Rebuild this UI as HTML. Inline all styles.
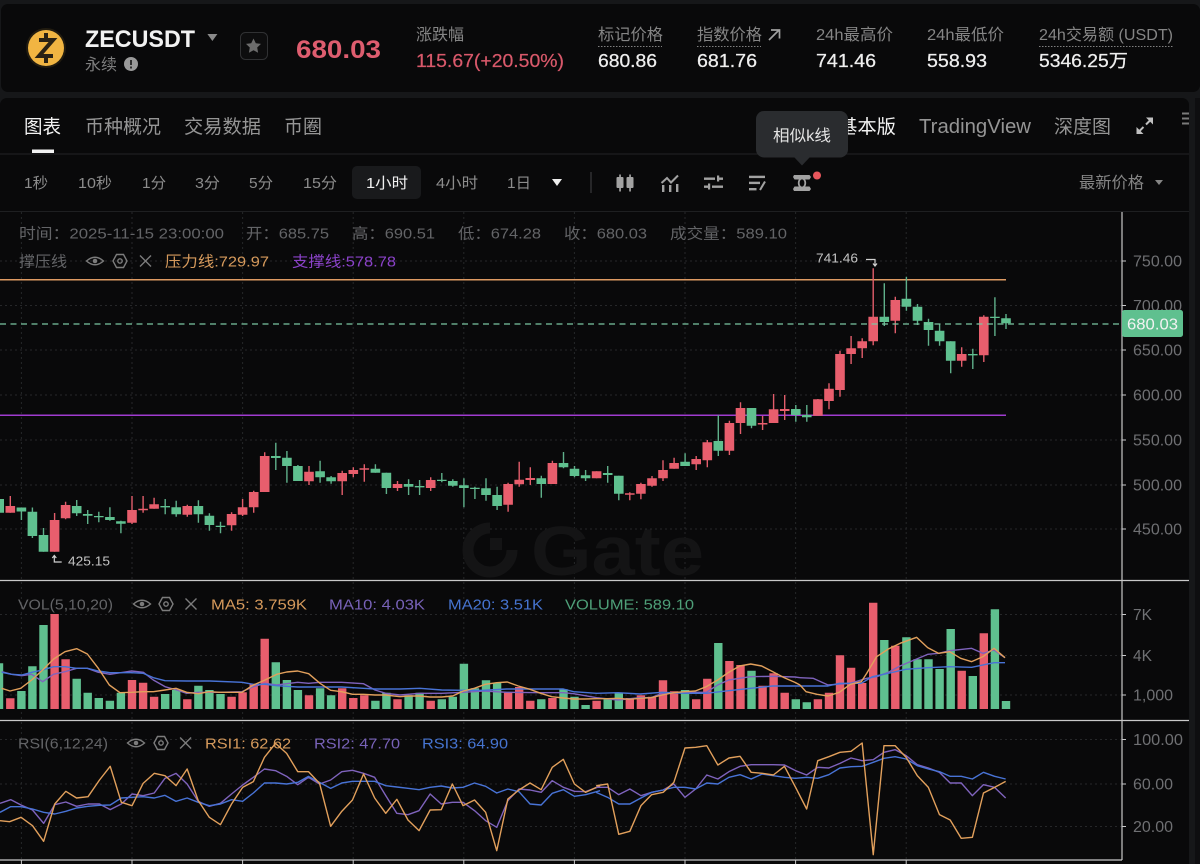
<!DOCTYPE html>
<html lang="zh">
<head>
<meta charset="utf-8">
<title>ZECUSDT</title>
<style>
html,body{margin:0;padding:0;background:#18191b;width:1200px;height:864px;overflow:hidden}
svg{display:block}
text{font-family:"Liberation Sans","Noto Sans CJK SC",sans-serif}
</style>
</head>
<body>
<svg width="1200" height="864" viewBox="0 0 1200 864" xmlns="http://www.w3.org/2000/svg">
<defs>
<g id="eye" fill="none" stroke="#7c7c7c" stroke-width="1.4"><path d="M-8.5 0Q0-7.5 8.5 0Q0 7.5-8.5 0z"/><circle r="1.6" fill="#7c7c7c"/></g>
<g id="hex" fill="none" stroke="#7c7c7c" stroke-width="1.4"><path d="M-7 0L-3.5-6.5H3.5L7 0L3.5 6.5H-3.5z"/><circle r="2.2"/></g>
<g id="cross" fill="none" stroke="#7c7c7c" stroke-width="1.4"><path d="M-5.5-5.5L5.5 5.5M5.5-5.5L-5.5 5.5"/></g>
</defs>

<rect width="1200" height="864" fill="#161719"/>
<rect x="1195" y="98" width="5" height="766" fill="#0e0e10"/>
<rect x="1" y="4" width="1199" height="88" rx="7" fill="#09090a"/>
<rect x="0" y="98" width="1189" height="780" rx="7" fill="#09090a"/>

<!-- header -->
<circle cx="46" cy="48" r="20" fill="#221c10"/>
<circle cx="46" cy="48" r="18" fill="#f1b542"/>
<path d="M39 40H53L39 56H53M46 33V40M46 56V63" fill="none" stroke="#2a2214" stroke-width="4"/>
<text x="85" y="47" font-size="24" font-weight="700" fill="#f2f2f2" textLength="110" lengthAdjust="spacingAndGlyphs">ZECUSDT</text>
<path d="M207.4 34H217.4L212.4 41z" fill="#8a8a8a"/>
<text x="85" y="70" font-size="16" fill="#7e7e7e">永续</text>
<circle cx="131" cy="64" r="7" fill="#9a9a9a"/>
<path d="M131 60V65M131 66.5V68.5" stroke="#222" stroke-width="1.8"/>
<rect x="240.5" y="32.5" width="27" height="27" rx="5" fill="#0d0d0e" stroke="#303133"/>
<path d="M253.5 38.5l2.3 4.7 5.2.7-3.8 3.6.9 5.2-4.6-2.5-4.6 2.5.9-5.2-3.8-3.6 5.2-.7z" fill="#6c6c6c"/>
<text x="296" y="58" font-size="25" font-weight="700" fill="#de5d6f" textLength="85" lengthAdjust="spacingAndGlyphs">680.03</text>
<text x="416" y="40" font-size="16" fill="#858585">涨跌幅</text>
<text x="416" y="67" font-size="18" fill="#d9596b" stroke="#d9596b" stroke-width=".2" textLength="148" lengthAdjust="spacingAndGlyphs">115.67(+20.50%)</text>

<g font-size="16" fill="#858585">
<text x="598" y="40" textLength="65" lengthAdjust="spacingAndGlyphs">标记价格</text>
<text x="697" y="40" textLength="65" lengthAdjust="spacingAndGlyphs">指数价格</text>
<text x="816" y="40" textLength="77" lengthAdjust="spacingAndGlyphs">24h最高价</text>
<text x="927" y="40" textLength="77" lengthAdjust="spacingAndGlyphs">24h最低价</text>
<text x="1039" y="40" textLength="134" lengthAdjust="spacingAndGlyphs">24h交易额 (USDT)</text>
</g>
<path d="M598 46.5H662M697 46.5H761M1039 46.5H1173" stroke="#808080" stroke-width="1" stroke-dasharray="1.5 1.5"/>
<path d="M769 40L779 30M771 30H779.5V38.5" fill="none" stroke="#a0a0a0" stroke-width="1.7"/>
<g font-size="18" fill="#efefef" stroke="#efefef" stroke-width=".25">
<text x="598" y="67" textLength="59" lengthAdjust="spacingAndGlyphs">680.86</text>
<text x="697" y="67" textLength="60" lengthAdjust="spacingAndGlyphs">681.76</text>
<text x="816" y="67" textLength="60" lengthAdjust="spacingAndGlyphs">741.46</text>
<text x="927" y="67" textLength="60" lengthAdjust="spacingAndGlyphs">558.93</text>
<text x="1039" y="67" textLength="89" lengthAdjust="spacingAndGlyphs">5346.25万</text>
</g>

<!-- tabs -->
<g font-size="19" fill="#959595">
<text x="24" y="133" fill="#f2f2f2" textLength="37" lengthAdjust="spacingAndGlyphs">图表</text>
<text x="85" y="133" textLength="76" lengthAdjust="spacingAndGlyphs">币种概况</text>
<text x="184" y="133" textLength="77" lengthAdjust="spacingAndGlyphs">交易数据</text>
<text x="284" y="133" textLength="38" lengthAdjust="spacingAndGlyphs">币圈</text>
<text x="838" y="133" fill="#f2f2f2" textLength="58" lengthAdjust="spacingAndGlyphs">基本版</text>
<text x="919" y="133" font-size="20" textLength="112" lengthAdjust="spacingAndGlyphs">TradingView</text>
<text x="1054" y="133" textLength="57" lengthAdjust="spacingAndGlyphs">深度图</text>
</g>
<rect x="32" y="149.5" width="22" height="3.5" fill="#f2f2f2"/>
<path d="M0 154H1189" stroke="#232426" stroke-width="1"/>
<path d="M1153 117.5V124.5L1146 117.5zM1136.5 134V127L1143.5 134z" fill="#c0c0c0"/>
<path d="M1150.5 120L1146 124.5M1139 131.5L1143.5 127" stroke="#c0c0c0" stroke-width="2"/>
<path d="M1182 113.5H1189M1182 118.5H1189M1182 123.5H1189" stroke="#7a7a7a" stroke-width="2"/>

<!-- toolbar -->
<rect x="352" y="166" width="69" height="33" rx="5" fill="#191a1c"/>
<g font-size="15" fill="#8c8c8c">
<text x="24" y="188" textLength="24" lengthAdjust="spacingAndGlyphs">1秒</text>
<text x="78" y="188" textLength="34" lengthAdjust="spacingAndGlyphs">10秒</text>
<text x="142" y="188" textLength="24" lengthAdjust="spacingAndGlyphs">1分</text>
<text x="195" y="188" textLength="25" lengthAdjust="spacingAndGlyphs">3分</text>
<text x="249" y="188" textLength="24" lengthAdjust="spacingAndGlyphs">5分</text>
<text x="303" y="188" textLength="34" lengthAdjust="spacingAndGlyphs">15分</text>
<text x="366" y="188" fill="#f0f0f0" textLength="42" lengthAdjust="spacingAndGlyphs">1小时</text>
<text x="436" y="188" textLength="42" lengthAdjust="spacingAndGlyphs">4小时</text>
<text x="507" y="188" textLength="24" lengthAdjust="spacingAndGlyphs">1日</text>
<text x="1079" y="188" font-size="16" fill="#858585" textLength="65" lengthAdjust="spacingAndGlyphs">最新价格</text>
</g>
<path d="M552 179H562L557 186z" fill="#eee"/>
<path d="M1155 180H1163L1159 185z" fill="#858585"/>
<path d="M591 172V193" stroke="#3a3b3d" stroke-width="1.2"/>
<!-- icons -->
<g fill="#a2a2a2" stroke="none">
<rect x="616.5" y="177" width="7" height="11" rx="1"/><rect x="619.2" y="174.5" width="1.7" height="17"/>
<rect x="626.5" y="177" width="7" height="11" rx="1"/><rect x="629.2" y="174.5" width="1.7" height="17"/>
<rect x="662" y="185" width="2.4" height="7"/><rect x="669" y="185" width="2.4" height="7"/><rect x="676" y="184" width="2.4" height="8"/>
<rect x="704" y="177.5" width="11" height="2.4"/><rect x="717" y="175.5" width="2.2" height="6"/><rect x="719" y="177.5" width="4" height="2.4"/>
<rect x="704" y="185.5" width="4" height="2.4"/><rect x="708" y="183.5" width="2.2" height="6"/><rect x="712" y="185.5" width="11" height="2.4"/>
<rect x="749" y="175.7" width="16" height="2.4"/><rect x="749" y="181.7" width="11" height="2.4"/><rect x="749" y="188" width="7.5" height="2.4"/>
<path d="M794 175H809.5L811 177L809.5 179.5H794.5L793 177zM794.5 186.5H809.5L811 189L809.5 191H794L793 189z"/>
</g>
<path d="M661.5 183L667 178L671 182.5L678 175.5" fill="none" stroke="#a2a2a2" stroke-width="2"/>
<path d="M765 181.5L760 190" fill="none" stroke="#a2a2a2" stroke-width="2"/>
<ellipse cx="802" cy="183" rx="3.3" ry="4.6" fill="none" stroke="#a2a2a2" stroke-width="1.8"/>
<circle cx="817" cy="175.5" r="4" fill="#e8565c"/>
<path d="M0 211.5H1189" stroke="#1e1f21" stroke-width="1"/>

<!-- grid -->
<g stroke="#262729" stroke-width="1" stroke-dasharray="2 3" fill="none">
<path d="M0 261H1122M0 350H1122M0 395H1122M0 440H1122M0 485H1122M0 529H1122M0 305.5H1122"/>
<path d="M0 614.5H1122M0 655.5H1122M0 695H1122M0 739.5H1122M0 784H1122M0 826.5H1122"/>
<path d="M21.4 212V860M132 212V860M242.6 212V860M353.2 212V860M463.8 212V860M574.4 212V860M685 212V860M795.6 212V860M906.2 212V860"/>
</g>

<!-- watermark -->
<g fill="#141415">
<path d="M490 528A22 22 0 1 0 512 550" fill="none" stroke="#141415" stroke-width="11"/>
<rect x="490" y="538" width="12" height="12"/>
<text x="531" y="575" font-size="70" font-weight="700" textLength="173" lengthAdjust="spacingAndGlyphs">Gate</text>
</g>

<!-- sr lines -->
<path d="M0 279.7H1006" stroke="#dd9a63" stroke-width="1.5"/>
<path d="M0 415.3H1006" stroke="#a03ccf" stroke-width="1.5"/>

<!-- red wicks -->
<path fill="none" stroke="#e25d6b" stroke-width="1.4" d="M10.3 496V512.7M54.6 513V551.7M65.6 501.7V519.3M132 496V524M143.1 496V512.7M154.1 497.7V508.7M187.3 504.7V516.7M231.6 512.3V530.7M242.6 499V516M253.7 490.7V512.7M264.7 452.3V492M309 466V485M342.2 470.7V495M353.3 467.3V477.3M364.3 464.3V481.7M397.5 481V491M430.7 477.3V491M508.1 482.7V511.7M519.2 461.7V486.7M530.3 467.3V485M552.4 460.7V484M596.6 471.3V478.3M629.8 492.3V500.3M640.9 482.7V499.3M652 476V486.7M663 460.3V481M674.1 457.7V468.7M696.2 456V470M707.3 440V467.3M729.4 420.7V455M740.5 402.3V434M762.6 416V430M773.6 394V423M784.7 395V420M817.9 399V415.7M829 383.3V409.3M840 350.7V396.7M851.1 336V364M862.2 338.3V358M873.2 268.3V345.3M895.3 296.7V333.3M961.7 347.3V366.7M983.8 315.3V362"/>
<!-- red bodies -->
<path fill="none" stroke="#e85e6d" stroke-width="9.6" d="M10.3 506V512.7M54.6 520V551.7M65.6 505V518.3M132 510V522.7M143.1 508.7V510.3M154.1 504.3V508.7M187.3 506V514.7M231.6 514V525.3M242.6 507.3V514.7M253.7 492V507.3M264.7 456V492M309 471.7V481.3M342.2 473V481.3M353.3 470V474M364.3 468.3V469.7M397.5 484V488M430.7 480V488M508.1 484V504.7M519.2 479.7V484.3M530.3 478V480M552.4 463V484M596.6 471.3V478.3M629.8 493.3V494.7M640.9 484V493.7M652 478.3V485.7M663 470V478.3M674.1 463V468.7M696.2 459V464.3M707.3 442.3V460.3M729.4 423V450.7M740.5 408V423M762.6 423V424.5M773.6 409.3V423M784.7 409V411M817.9 399.3V415.7M829 388.7V401M840 354V390M851.1 348.3V354M862.2 341.3V348.3M873.2 316.7V341.3M895.3 300V320.7M961.7 354V360.7M983.8 316.7V355.3"/>
<!-- green wicks -->
<path fill="none" stroke="#5fb08a" stroke-width="1.4" d="M21.4 507.5V520M32.4 507.5V538M43.5 528V551.7M76.7 500V516M87.7 510V524M98.8 511.7V522.3M109.9 507.3V520.7M120.9 520.7V533.3M165.2 499V514.3M176.2 500.7V516.7M198.4 500.3V522.7M209.4 513.3V530.7M220.5 521.7V533.3M275.8 442.7V470M286.9 451V482.7M297.9 465V481M320.1 460.7V482.7M331.1 476V483.7M375.4 464.3V472.7M386.4 472.7V494M408.6 479.3V495M419.6 480V495M441.8 473V482.3M452.8 479.3V486.7M463.9 478.3V507.3M474.9 486.7V499M486 478.3V500.7M497.1 486.7V510M541.3 475.7V497.7M563.5 452V468.3M574.5 466V477.3M585.6 470V481M607.7 466V482.7M618.8 475.7V500.3M685.1 453.3V466M718.3 415.3V456M751.5 408V428.3M795.8 405V421.7M806.8 405V421.7M884.3 283.3V326M906.4 276.7V310.7M917.5 304V325M928.5 318.7V345.7M939.6 324V345.7M950.7 341.3V373.3M972.8 348.7V369M994.9 297.3V336M1006 314V329"/>
<!-- green bodies -->
<path fill="none" stroke="#5fc08f" stroke-width="9.6" d="M-.8 499V512.7M21.4 507.5V511.5M32.4 511.7V536M43.5 535V551.7M76.7 506V513.3M87.7 514V515.7M98.8 516V517.3M109.9 517V520M120.9 521.3V523.7M165.2 506V507.4M176.2 507.3V514.3M198.4 506V514.3M209.4 515.7V525M220.5 525.7V527M275.8 456V458M286.9 457.7V466M297.9 466V481M320.1 471.3V477.3M331.1 477.3V481.3M375.4 468.7V472.7M386.4 472.7V488M408.6 484V486.7M419.6 486V487.4M441.8 479.7V481M452.8 481V485.7M463.9 485.3V488M474.9 487.7V489M486 488.3V495M497.1 495V506M541.3 478.3V484M563.5 463V467.3M574.5 468.7V476M585.6 475.3V478.3M607.7 473V475M618.8 475.7V493.7M685.1 461.7V466M718.3 441V450.7M751.5 408V425.7M795.8 409V415M806.8 415V417.3M884.3 316.7V322M906.4 298.7V306.7M917.5 306.7V320.7M928.5 322V330M939.6 330.7V341.3M950.7 341.3V360.7M972.8 354V355.4M994.9 316.7V318M1006 318.3V323.3"/>

<!-- current price -->
<path d="M0 324H1122" stroke="#7cc6a2" stroke-width="1.2" stroke-dasharray="6 4.5"/>

<!-- hi/lo markers -->
<text x="816" y="262.5" font-size="13" fill="#c4c4c4" textLength="42" lengthAdjust="spacingAndGlyphs">741.46</text>
<path d="M866 259.5H875V266M873 263.5L875 266L877 263.5" fill="none" stroke="#d0d0d0" stroke-width="1.2"/>
<text x="68" y="565.5" font-size="13" fill="#c4c4c4" textLength="42" lengthAdjust="spacingAndGlyphs">425.15</text>
<path d="M61.7 562H54.3V555.5M52.3 558L54.3 555.5L56.3 558" fill="none" stroke="#d0d0d0" stroke-width="1.2"/>

<!-- legends -->
<g font-size="15" fill="#636467">
<text x="19" y="238.5" textLength="205" lengthAdjust="spacingAndGlyphs">时间：2025-11-15 23:00:00</text>
<text x="246" y="238.5" textLength="83" lengthAdjust="spacingAndGlyphs">开：685.75</text>
<text x="352" y="238.5" textLength="83" lengthAdjust="spacingAndGlyphs">高：690.51</text>
<text x="458" y="238.5" textLength="83" lengthAdjust="spacingAndGlyphs">低：674.28</text>
<text x="564" y="238.5" textLength="83" lengthAdjust="spacingAndGlyphs">收：680.03</text>
<text x="670" y="238.5" textLength="117" lengthAdjust="spacingAndGlyphs">成交量：589.10</text>
<text x="19" y="266.5" textLength="48" lengthAdjust="spacingAndGlyphs">撑压线</text>
<text x="165" y="266.5" fill="#d69a5c" textLength="104" lengthAdjust="spacingAndGlyphs">压力线:729.97</text>
<text x="292" y="266.5" fill="#8a42c8" textLength="104" lengthAdjust="spacingAndGlyphs">支撑线:578.78</text>
<text x="18" y="609.5" textLength="95" lengthAdjust="spacingAndGlyphs">VOL(5,10,20)</text>
<text x="211" y="609.5" fill="#d69a5c" textLength="96" lengthAdjust="spacingAndGlyphs">MA5: 3.759K</text>
<text x="329" y="609.5" fill="#7862b8" textLength="96" lengthAdjust="spacingAndGlyphs">MA10: 4.03K</text>
<text x="448" y="609.5" fill="#4674d0" textLength="95" lengthAdjust="spacingAndGlyphs">MA20: 3.51K</text>
<text x="565" y="609.5" fill="#4e9f78" textLength="129" lengthAdjust="spacingAndGlyphs">VOLUME: 589.10</text>
<text x="18" y="748.5" textLength="90" lengthAdjust="spacingAndGlyphs">RSI(6,12,24)</text>
<text x="205" y="748.5" fill="#d69a5c" textLength="86" lengthAdjust="spacingAndGlyphs">RSI1: 62.62</text>
<text x="314" y="748.5" fill="#7862b8" textLength="86" lengthAdjust="spacingAndGlyphs">RSI2: 47.70</text>
<text x="422" y="748.5" fill="#4674d0" textLength="86" lengthAdjust="spacingAndGlyphs">RSI3: 64.90</text>
</g>
<use href="#eye" x="95" y="261"/><use href="#hex" x="120" y="261"/><use href="#cross" x="145.5" y="261"/>
<use href="#eye" x="142" y="604"/><use href="#hex" x="166" y="604"/><use href="#cross" x="191" y="604"/>
<use href="#eye" x="136" y="743"/><use href="#hex" x="161" y="743"/><use href="#cross" x="185.6" y="743"/>

<!-- volume bars -->
<path fill="none" stroke="#5fc08f" stroke-width="8.4" d="M-1 709V663.3M21.4 709V691M32.4 709V666.3M43.5 709V625M76.7 709V678.7M87.7 709V692.7M98.8 709V698M109.9 709V700.7M120.9 709V692.7M165.2 709V694M176.2 709V690M198.4 709V685.7M209.4 709V690M220.5 709V694M275.8 709V662.3M286.9 709V680M297.9 709V690M320.1 709V688.3M331.1 709V695.3M375.4 709V700.7M386.4 709V692.7M408.6 709V695.3M419.6 709V692.7M441.8 709V699.3M452.8 709V696.7M463.9 709V663.7M474.9 709V688.3M486 709V680.3M497.1 709V683M541.3 709V699.3M563.5 709V689.3M574.5 709V696.7M585.6 709V705M607.7 709V699.3M618.8 709V692.7M685.1 709V690M718.3 709V643M751.5 709V670.7M795.8 709V699.3M806.8 709V702.3M884.3 709V640M906.4 709V637.3M917.5 709V659.3M928.5 709V659.3M939.6 709V669M950.7 709V629M972.8 709V676M994.9 709V609.3M1006 709V701"/>
<path fill="none" stroke="#e85e6d" stroke-width="8.4" d="M10.3 709V698.3M54.6 709V614M65.6 709V659.3M132 709V680M143.1 709V682.7M154.1 709V696.7M187.3 709V699.3M231.6 709V696.7M242.6 709V692.3M253.7 709V684.3M264.7 709V638.7M309 709V695.3M342.2 709V688.3M353.3 709V698M364.3 709V695.3M397.5 709V699.3M430.7 709V700.7M508.1 709V692.7M519.2 709V687M530.3 709V700.7M552.4 709V698M596.6 709V700.7M629.8 709V698M640.9 709V695.3M652 709V696.7M663 709V680.3M674.1 709V691.3M696.2 709V699.3M707.3 709V678.7M729.4 709V661M740.5 709V665M762.6 709V685.7M773.6 709V673.3M784.7 709V692.7M817.9 709V699.3M829 709V692.7M840 709V655.3M851.1 709V667.7M862.2 709V683M873.2 709V602.7M895.3 709V645.7M961.7 709V670.7M983.8 709V633.3"/>

<!-- volume lines -->
<g fill="none" stroke-width="1.4" stroke-linejoin="round">
<g transform="translate(0 585) scale(.33333)">
<polyline vector-effect="non-scaling-stroke" stroke="#7f63bd" points="5,260 35,268 65,272 95,268 128,290 160,268 195,260 230,250 262,250 295,262 330,268 395,258 430,262 460,285 495,305 530,315 560,325 595,322 660,322 726,320 760,305 795,295 830,300 860,296 893,292 926,295 960,292 1025,292 1090,296 1125,315 1157,325 1200,330"/>
<polyline vector-effect="non-scaling-stroke" stroke="#4873d6" points="5,262 35,268 65,270 95,262 128,255 160,245 195,245 230,250 262,250 295,258 330,263 395,263 430,265 460,278 495,287 560,288 630,288 726,292 760,298 795,298 830,302 893,306 960,306 1025,306 1090,310 1125,312 1200,312"/>
<polyline vector-effect="non-scaling-stroke" stroke="#e2a05c" points="5,310 30,318 62,310 95,285 128,255 161,222 195,200 230,191 262,207 295,250 328,300 360,323 395,322 428,320 460,320 495,315 528,310 560,322 595,326 627,320 660,322 693,322 726,322 760,300 795,285 830,268 860,261 893,258 926,266 960,295 992,316 1025,320 1058,328 1090,328 1125,330 1157,330 1200,335"/>
</g>
<g transform="translate(400 585) scale(.33333)">
<polyline vector-effect="non-scaling-stroke" stroke="#7f63bd" points="0,330 60,325 125,325 190,322 250,318 320,322 420,323 490,323 521,326 590,338 654,345 720,338 753,338 787,325 853,322 919,322 953,300 986,285 1019,280 1052,275 1118,274 1185,276 1200,278"/>
<polyline vector-effect="non-scaling-stroke" stroke="#4873d6" points="0,312 60,310 125,315 190,316 250,316 320,312 420,312 490,312 521,320 590,325 654,323 720,327 787,322 853,325 919,325 986,317 1052,310 1118,303 1200,303"/>
<polyline vector-effect="non-scaling-stroke" stroke="#e2a05c" points="0,335 25,333 58,333 90,336 125,336 158,333 190,318 223,310 256,298 290,293 322,291 355,303 390,313 422,325 455,335 490,339 521,342 554,342 590,341 623,341 654,340 687,343 720,340 753,338 787,330 820,323 853,320 886,318 919,305 953,285 986,262 1019,243 1052,237 1085,243 1118,260 1152,278 1185,292 1200,300"/>
</g>
<g transform="translate(800 585) scale(.33333)">
<polyline vector-effect="non-scaling-stroke" stroke="#7f63bd" points="0,278 40,280 84,300 151,295 200,280 230,275 265,262 300,243 350,222 383,208 416,205 449,197 515,190 549,205 582,195 615,218"/>
<polyline vector-effect="non-scaling-stroke" stroke="#4873d6" points="0,303 84,303 118,295 184,295 217,275 265,265 317,253 383,248 449,245 515,247 582,233 615,233"/>
<polyline vector-effect="non-scaling-stroke" stroke="#e2a05c" points="0,300 18,320 51,328 84,333 118,322 151,298 184,290 200,265 230,215 265,192 300,175 350,157 383,188 416,205 449,200 482,220 515,230 549,215 582,190 615,218"/>
</g>

<!-- RSI -->
<g transform="translate(0 724) scale(.3827 .33333)">
<polyline vector-effect="non-scaling-stroke" stroke="#7f63bd" points="0,238 28,227 55,243 85,258 114,298 143,242 172,234 200,247 230,240 260,240 288,257 317,240 345,210 374,215 403,207 431,163 460,148 489,180 518,232 547,247 576,238 605,210 634,183 662,160 691,135 720,140 749,157 778,182 806,160 835,180 864,168 893,143 921,139 950,148 979,160 1008,215 1037,268 1066,272 1095,260 1124,210 1153,240 1182,235 1210,235 1240,260 1269,290 1298,310 1327,230 1356,195 1385,198 1414,205 1443,170 1472,190 1501,202 1530,203 1568,187"/>
<polyline vector-effect="non-scaling-stroke" stroke="#4873d6" points="0,265 28,248 55,248 85,255 114,265 143,270 172,262 200,252 230,247 260,244 288,243 317,222 345,220 374,218 403,222 431,214 460,232 489,222 518,235 547,245 576,240 605,227 634,232 662,207 691,177 720,177 749,180 778,175 806,157 835,175 864,193 893,177 921,172 950,172 979,172 1008,185 1037,189 1066,193 1095,197 1124,190 1153,186 1182,192 1210,190 1240,177 1269,187 1298,207 1327,195 1356,203 1385,240 1414,243 1443,208 1472,197 1501,217 1530,212 1568,200"/>
<polyline vector-effect="non-scaling-stroke" stroke="#e2a05c" points="0,290 25,293 55,280 85,305 114,352 143,240 172,202 200,222 230,218 260,168 288,127 317,235 345,245 374,178 403,148 431,155 460,185 489,135 518,230 547,280 576,302 605,240 634,190 662,173 691,100 720,58 749,88 778,143 806,143 835,178 864,307 893,262 921,228 950,150 979,222 1008,268 1037,226 1066,288 1095,320 1124,258 1153,257 1182,180 1210,245 1240,228 1269,265 1298,380 1327,225 1356,198 1385,177 1414,197 1443,130 1472,106 1501,180 1530,205 1568,185"/>
</g>
<g transform="translate(600 724) scale(.3827 .33333)">
<polyline vector-effect="non-scaling-stroke" stroke="#7f63bd" points="-10,190 20,190 49,212 78,195 107,215 135,205 165,198 193,180 222,220 250,195 279,153 308,165 337,143 366,127 395,122 424,122 453,122 482,123 511,140 540,153 569,130 598,132 627,118 656,102 685,110 714,107 742,85 771,77 800,95 829,122 858,132 887,145 915,177 944,177 973,215 1002,182 1031,190 1060,222"/>
<polyline vector-effect="non-scaling-stroke" stroke="#4873d6" points="-10,205 20,220 49,240 78,240 107,222 135,205 165,198 193,190 222,190 250,195 279,177 308,180 337,160 366,152 395,165 424,150 453,155 482,160 511,163 540,160 569,163 598,152 627,132 656,128 685,127 714,115 742,103 771,98 800,105 829,125 858,135 887,143 915,157 944,157 973,165 1002,145 1031,157 1060,165"/>
<polyline vector-effect="non-scaling-stroke" stroke="#e2a05c" points="-10,185 20,180 49,331 78,322 107,245 135,212 165,205 193,175 222,72 250,70 279,65 308,123 337,102 366,97 395,145 424,148 453,153 482,127 511,190 540,255 569,110 598,98 627,85 656,82 685,57 714,392 742,65 771,65 800,100 829,155 858,190 887,272 915,288 944,343 973,340 1002,207 1031,190 1060,172"/>
</g>
</g>

<!-- separators / axes -->
<path d="M0 580.5H1189M0 720.5H1189" stroke="#c9c9c9" stroke-width="1.2"/>
<path d="M0 860H1122" stroke="#c9c9c9" stroke-width="1.2"/>
<path d="M1122 212V860" stroke="#c9c9c9" stroke-width="1.2"/>
<path d="M21.4 860V864M132 860V864M242.6 860V864M353.2 860V864M463.8 860V864M574.4 860V864M685 860V864M795.6 860V864M906.2 860V864" stroke="#c9c9c9" stroke-width="1"/>
<path d="M1122 261H1126M1122 305.5H1126M1122 350H1126M1122 395H1126M1122 440H1126M1122 485H1126M1122 529H1126M1122 614.5H1126M1122 655.5H1126M1122 695H1126M1122 739.5H1126M1122 784H1126M1122 826.5H1126" stroke="#c9c9c9" stroke-width="1"/>
<g font-size="15.5" fill="#6f7073">
<text x="1133" y="266.5" textLength="49" lengthAdjust="spacingAndGlyphs">750.00</text>
<text x="1133" y="311" textLength="49" lengthAdjust="spacingAndGlyphs">700.00</text>
<text x="1133" y="355.5" textLength="49" lengthAdjust="spacingAndGlyphs">650.00</text>
<text x="1133" y="400.5" textLength="49" lengthAdjust="spacingAndGlyphs">600.00</text>
<text x="1133" y="445.5" textLength="49" lengthAdjust="spacingAndGlyphs">550.00</text>
<text x="1133" y="490.5" textLength="49" lengthAdjust="spacingAndGlyphs">500.00</text>
<text x="1133" y="534.5" textLength="49" lengthAdjust="spacingAndGlyphs">450.00</text>
<text x="1133" y="620" textLength="19" lengthAdjust="spacingAndGlyphs">7K</text>
<text x="1133" y="661" textLength="19" lengthAdjust="spacingAndGlyphs">4K</text>
<text x="1133" y="700.5" textLength="40" lengthAdjust="spacingAndGlyphs">1,000</text>
<text x="1133" y="745" textLength="50" lengthAdjust="spacingAndGlyphs">100.00</text>
<text x="1133" y="789.5" textLength="40" lengthAdjust="spacingAndGlyphs">60.00</text>
<text x="1133" y="832" textLength="40" lengthAdjust="spacingAndGlyphs">20.00</text>
</g>
<rect x="1122" y="310" width="61" height="27" rx="2.5" fill="#5fc08f"/>
<text x="1127" y="329.5" font-size="16" fill="#f2f2f2" textLength="51" lengthAdjust="spacingAndGlyphs">680.03</text>

<!-- tooltip -->
<rect x="756" y="111" width="92" height="46.5" rx="8" fill="#2a2c2f"/>
<path d="M794 157H810L802 165.5z" fill="#2a2c2f"/>
<text x="773" y="141" font-size="16" fill="#e2e2e2" textLength="58" lengthAdjust="spacingAndGlyphs">相似k线</text>
</svg>
</body>
</html>
